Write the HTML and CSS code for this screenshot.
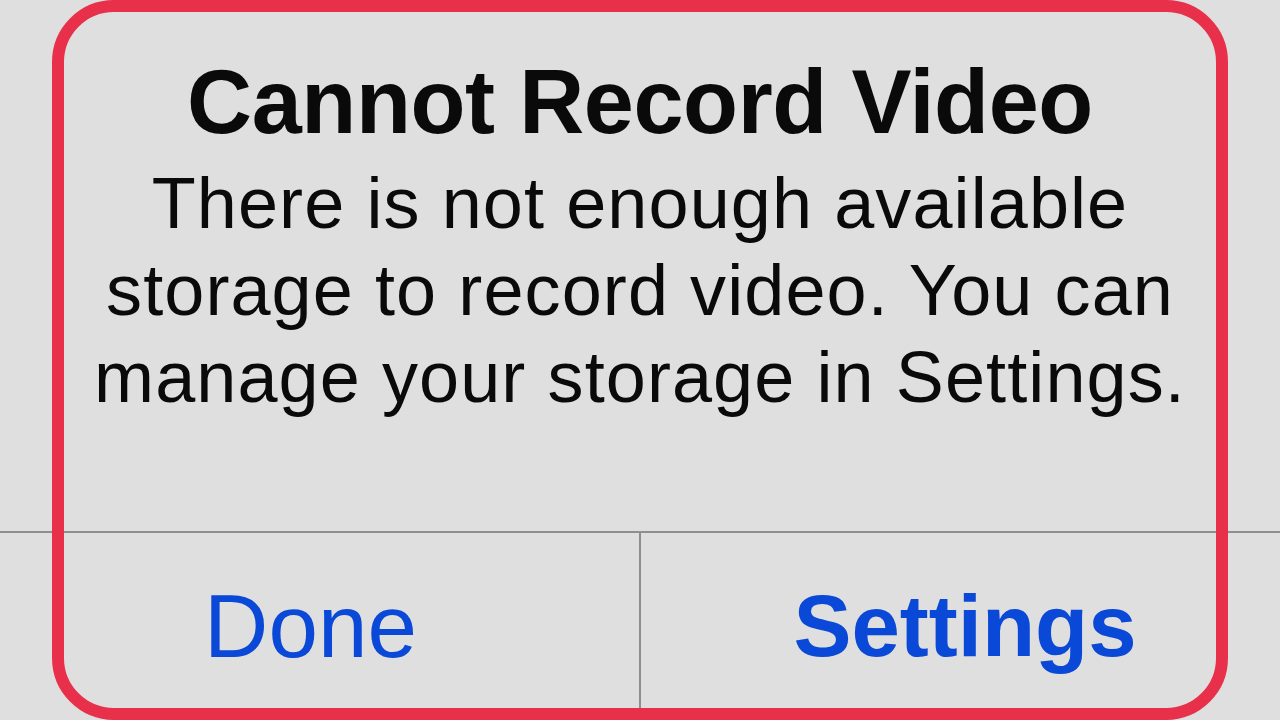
FILE: index.html
```html
<!DOCTYPE html>
<html lang="en">
<head>
<meta charset="utf-8">
<title>Cannot Record Video</title>
<link rel="stylesheet" href="styles.css">
</head>
<body>
<div class="alert">
  <div class="alert-body">
    <h1 class="alert-title">Cannot Record Video</h1>
    <p class="alert-message">There is not enough available<br>storage to record video. You can<br>manage your storage in Settings.</p>
  </div>
  <div class="alert-actions">
    <div class="action action-done">Done</div>
    <div class="action-sep"></div>
    <div class="action action-settings">Settings</div>
  </div>
  <div class="highlight"></div>
</div>
</body>
</html>
```
FILE: styles.css
```css
html, body {
  margin: 0;
  padding: 0;
}
body {
  width: 1280px;
  height: 720px;
  overflow: hidden;
  background: #dfdfdf;
  font-family: "Liberation Sans", Arial, Helvetica, sans-serif;
}
.alert {
  position: relative;
  width: 1280px;
  height: 720px;
  display: flex;
  flex-direction: column;
}
.alert-body {
  height: 533px;
  box-sizing: border-box;
  padding-top: 52px;
  border-bottom: 2px solid #8f8f8f;
  text-align: center;
  color: #0a0a0a;
}
.alert-title {
  margin: 0;
  font-size: 90px;
  line-height: 100px;
  font-weight: 700;
  letter-spacing: -0.4px;
}
.alert-message {
  margin: 8px 0 0;
  font-size: 72px;
  line-height: 87px;
  font-weight: 400;
  letter-spacing: 1.1px;
}
.alert-actions {
  flex: 1;
  display: flex;
}
.action {
  box-sizing: border-box;
  padding-top: 13px;
  font-size: 89px;
  line-height: 160px;
  color: #0a48d8;
  text-align: center;
}
.action-done {
  width: 639px;
  padding-right: 18px;
}
.action-sep {
  width: 2px;
  background: #8f8f8f;
}
.action-settings {
  flex: 1;
  font-weight: 700;
  font-size: 87px;
  padding-left: 9px;
}
.highlight {
  position: absolute;
  left: 52px;
  top: 0;
  width: 1176px;
  height: 720px;
  box-sizing: border-box;
  border: 12px solid #e8304a;
  border-radius: 62px;
  pointer-events: none;
}
```
